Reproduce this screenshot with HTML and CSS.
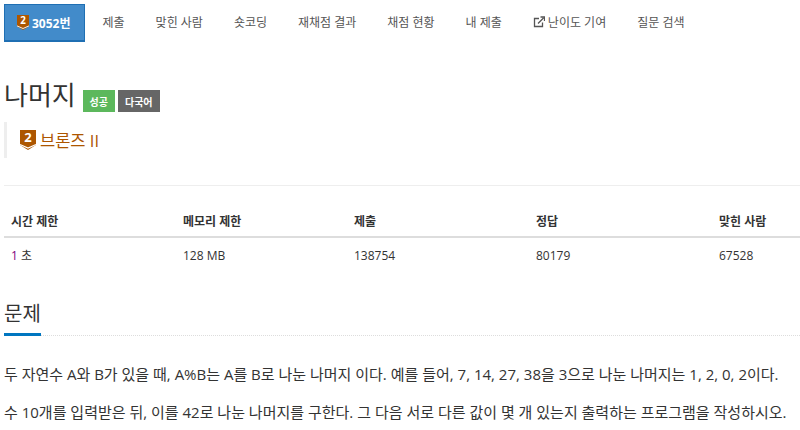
FILE: index.html
```html
<!DOCTYPE html>
<html lang="ko">
<head>
<meta charset="utf-8">
<title>나머지</title>
<link rel="stylesheet" href="styles.css">
</head>
<body>
<nav class="tabs">
  <a class="tab active">
    <svg class="tier-small" viewBox="0 0 16 20"><path d="M0 0H16V15L8 20L0 15Z" fill="#ad5600"/><path d="M0 14.5L8 18L16 14.5" fill="none" stroke="#fff" stroke-width="1.2"/><text x="8" y="12" class="tier-num">2</text></svg>
    <span class="strong">3052번</span>
  </a>
  <a class="tab">제출</a>
  <a class="tab">맞힌 사람</a>
  <a class="tab">숏코딩</a>
  <a class="tab">재채점 결과</a>
  <a class="tab">채점 현황</a>
  <a class="tab">내 제출</a>
  <a class="tab">
    <svg class="ext" viewBox="0 0 12 12"><path d="M6 2.5H1.5V10.5H9.5V6.5" fill="none" stroke="#555" stroke-width="1.3"/><path d="M5 7.5L10.5 2M7.5 1H11.5V5" fill="none" stroke="#555" stroke-width="1.3"/></svg>
    난이도 기여
  </a>
  <a class="tab">질문 검색</a>
</nav>

<header class="title-row">
  <h1 class="title">나머지</h1>
  <span class="label green">성공</span>
  <span class="label gray">다국어</span>
</header>

<blockquote class="tier">
  <svg class="tier-big" viewBox="0 0 16 20"><path d="M0 0H16V15L8 20L0 15Z" fill="#ad5600"/><path d="M0 14.5L8 18L16 14.5" fill="none" stroke="#fff" stroke-width="1.2"/><text x="8" y="12" class="tier-num">2</text></svg>
  <span>브론즈 II</span>
</blockquote>

<hr class="rule">

<table class="info">
  <thead>
    <tr><th class="c1">시간 제한</th><th class="c2">메모리 제한</th><th class="c3">제출</th><th class="c4">정답</th><th class="c5">맞힌 사람</th></tr>
  </thead>
  <tbody>
    <tr><td><span class="num">1</span> 초</td><td>128 MB</td><td>138754</td><td>80179</td><td>67528</td></tr>
  </tbody>
</table>

<section class="problem">
  <div class="headline"><h2>문제</h2></div>
  <p>두 자연수 A와 B가 있을 때, A%B는 A를 B로 나눈 나머지 이다. 예를 들어, 7, 14, 27, 38을 3으로 나눈 나머지는 1, 2, 0, 2이다.</p>
  <p>수 10개를 입력받은 뒤, 이를 42로 나눈 나머지를 구한다. 그 다음 서로 다른 값이 몇 개 있는지 출력하는 프로그램을 작성하시오.</p>
</section>
</body>
</html>
```
FILE: styles.css
```css
* { box-sizing: border-box; }
html, body { height: 430px; overflow: hidden; }
body {
  margin: 0;
  padding: 4px 0 0 4px;
  background: #fff;
  color: #333;
  font-family: "Open Sans", "Noto Sans CJK KR", sans-serif;
  font-size: 13px;
}
.tabs { display: flex; height: 38px; align-items: stretch; }
.tab {
  display: flex;
  align-items: center;
  gap: 3px;
  padding: 0 15.5px 2px;
  font-size: 12px;
  color: #555;
  white-space: nowrap;
}
.tab.active {
  width: 81px;
  margin-right: 2px;
  padding: 0 0 0 12px;
  background: #428bca;
  border: 1px solid #1f6fb3;
  border-width: 1px 1px 2px;
  color: #fff;
  font-weight: 700;
}
.tier-small { width: 12px; height: 15px; overflow: visible; }
.tier-big { width: 16px; height: 20px; overflow: visible; }
.tier-num { font: 700 13px "Open Sans", sans-serif; fill: #fff; text-anchor: middle; }
.ext { width: 12px; height: 12px; }
.title-row { display: flex; align-items: flex-end; margin-top: 37px; height: 33px; }
.title { margin: 0 7px 0 0; font-size: 26px; font-weight: 400; line-height: 34px; color: #333; }
.label {
  display: flex;
  align-items: center;
  justify-content: center;
  height: 22px;
  font-size: 10px;
  font-weight: 700;
  color: #fff;
}
.green { width: 32px; background: #5cb85c; margin-right: 3px; }
.gray { width: 42px; background: #666; }
.tier {
  display: flex;
  align-items: center;
  gap: 4px;
  height: 36px;
  margin: 10px 0 0;
  padding-left: 13px;
  border-left: 3px solid #eee;
  color: #ad5600;
  font-size: 16.5px;
}
.rule { height: 0; margin: 27px 0 0; border: 0; border-top: 1px solid #eee; }
.info { width: 796px; margin-top: 19px; border-collapse: collapse; table-layout: fixed; }
.info th, .info td { padding: 0 7px; text-align: left; font-size: 12px; }
.info th { height: 32px; font-weight: 700; color: #333; border-bottom: 2px solid #ddd; }
.info td { height: 35px; color: #333; }
.c1 { width: 172px; }
.c2 { width: 171px; }
.c3 { width: 182px; }
.c4 { width: 183px; }
.num { color: #800080; }
.problem { margin-top: 24px; }
.headline { border-bottom: 1px dotted #ddd; height: 40px; width: 796px; }
.headline h2 {
  display: inline-block;
  margin: 0;
  height: 40px;
  border-bottom: 3px solid #0076c0;
  font-size: 20px;
  font-weight: 400;
  line-height: 36px;
  color: #333;
}
.problem p { margin: 0; font-size: 15px; line-height: 20px; color: #333; white-space: nowrap; }
.problem .headline + p { margin-top: 28px; }
.problem p + p { margin-top: 18px; }
```
